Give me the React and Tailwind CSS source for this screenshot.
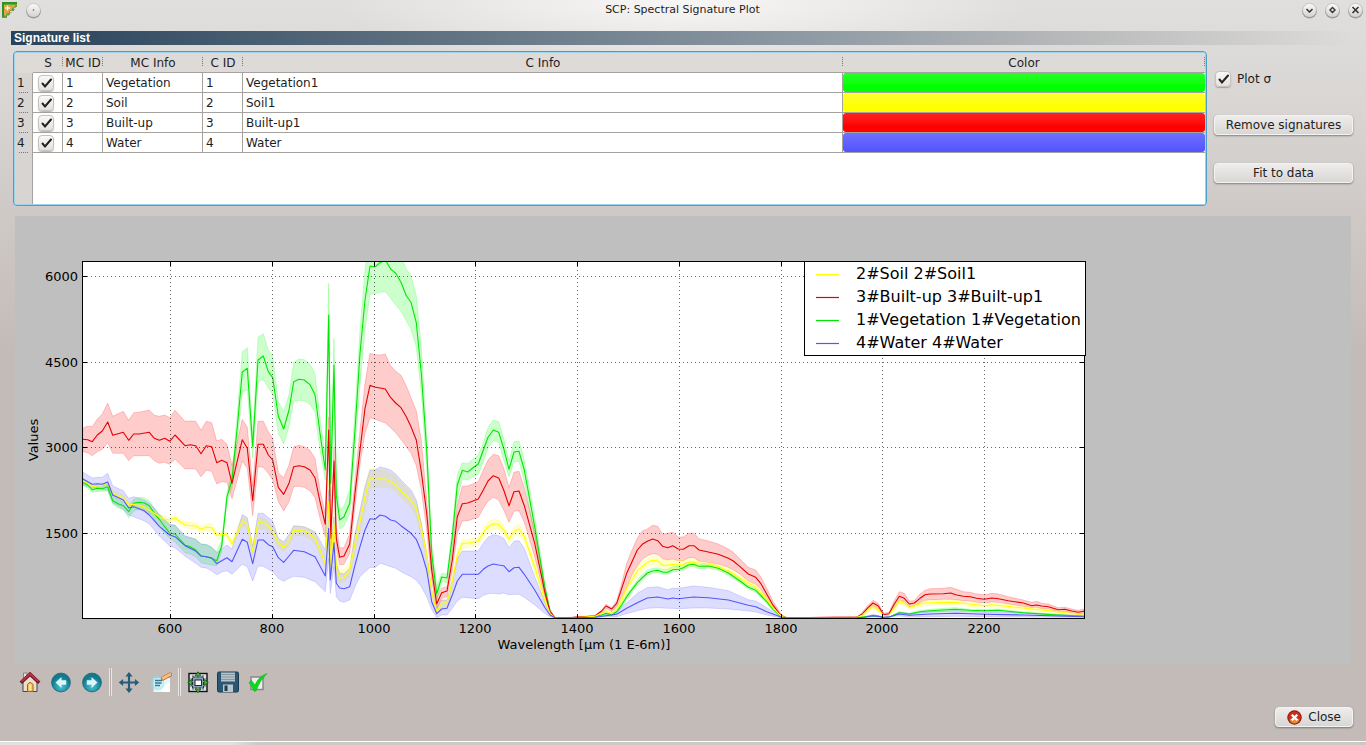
import React from "react";

// Each run: [origin x, origin y, samples]; samples are thirds of a unit from that origin,
// as [x, upper, mean, lower], or [x, value] where the deviation is nil.
const vegetation = [
  [70, 250, [[38,690,697,705],[53,695,705,715],[67,710,720,727],[82,705,715,725],[97,706,716,724],[113,702,710,722],[128,738,752,763],[144,748,761,773],[160,755,767,780],[176,770,785,803],[191,748,760,783],[207,742,757,778],[223,743,759,780],[238,752,767,790],[253,775,790,808],[268,795,808,830],[284,812,830,848],[299,825,849,865],[315,826,852,875],[345,860,885,908],[361,863,890,912],[377,868,900,920],[393,882,918,938],[409,883,920,942],[425,892,925,945],[440,905,932,948],[455,870,888,905],[471,725,740,755],[486,670,690,710],[502,490,530,570],[517,305,366,427],[532,293,355,419],[548,560,590,625],[564,262,330,397]]],
  [220, 250, [[130,251,318,388],[145,300,365,413],[158,318,383,433],[175,455,498,548],[191,485,537,582],[207,435,480,530],[221,337,395,455],[237,327,388,451],[253,329,390,452],[270,342,404,463],[285,372,434,486],[300,505,550,600],[316,620,660,690],[326,100,195,290],[332,660,700,740],[342,265,345,420],[349,690,735,770],[359,780,810,837],[372,768,800,828],[389,720,760,790]]],
  [330, 250, [[75,480,540,590],[90,240,310,400],[105,60,150,240],[120,-60,48,133],[135,-60,51,131],[150,-60,38,127],[166,-60,30,125],[182,-30,57,145],[197,0,70,165],[213,20,97,183],[229,57,137,213],[243,77,157,238],[259,138,218,290],[274,290,370,430],[290,560,600,660],[305,880,910,940],[320,1010,1032,1050],[335,970,981,995],[351,972,984,998]]],
  [430, 400, [[67,385,410,440],[82,225,255,295],[97,188,211,237],[113,191,216,240],[129,178,203,230],[145,165,192,223],[160,128,150,185],[174,83,112,143],[190,60,90,122],[206,65,97,127],[221,115,145,180],[237,185,208,230],[252,125,156,186],[267,124,154,184],[283,180,210,245],[314,350,380,410],[344,545,560,580],[360,628,635,642],[375,653]]],
  [560, 500, [[40,353],[105,350],[125,345],[138,337,340,344],[155,342,345,348],[170,330,335,340],[185,308,315,322],[200,283,290,298],[232,240,248,256],[262,210,219,226],[278,205,213,220],[293,203,211,218],[310,209,217,223],[323,208,217,222],[338,200,209,215],[358,199,208,214],[370,194,203,210],[385,187,195,202],[400,185,193,199],[415,193,199,206],[445,190,198,204],[475,198,205,211],[505,213,219,226],[540,237,243,249],[565,256,262,267],[587,265,271,277],[620,300,305,310],[640,325,329,333],[663,349],[680,353]]],
  [840, 560, [[52,173],[84,169],[99,167],[115,168],[131,173],[150,170],[178,155,158,160],[193,158,160,162],[208,160,162,164],[240,151,155,158],[270,148,152,155],[345,143,148,152],[390,148,151,153],[433,148,152,155],[475,147,151,154],[550,155,158,160],[640,162,164,166],[732,168,169,170]]],
];

const builtUp = [
  [70, 250, [[38,535,568,605],[53,528,569,608],[67,530,575,617],[82,507,555,605],[97,492,543,598],[113,459,516,578],[128,499,556,610],[160,484,547,610],[176,511,571,632],[191,488,552,617],[207,487,552,617],[238,480,547,617],[253,496,565,632],[268,499,571,640],[284,495,565,637],[299,503,574,643],[315,481,555,628],[345,514,587,657],[361,513,584,656],[377,514,587,657],[393,541,611,680],[409,514,587,661],[425,518,590,664],[440,573,638,702],[455,568,631,695],[471,583,638,697],[486,647,700,746],[517,508,569,633],[532,532,595,655],[548,710,752,797],[564,514,583,650]]],
  [220, 250, [[130,514,583,652],[145,545,615,670],[158,565,630,690],[175,668,712,755],[191,683,733,783],[207,645,700,755],[221,590,650,710],[237,586,647,709],[253,590,650,712],[270,601,660,722],[285,625,683,743],[300,720,755,805],[316,790,823,860],[326,500,540,580],[332,840,865,890],[342,590,633,680],[349,830,865,895],[359,893,922,945],[372,893,918,943],[389,850,882,910]]],
  [330, 250, [[75,690,730,770],[90,540,600,640],[105,400,475,550],[120,310,406,503],[133,314,411,507],[150,315,414,513],[166,312,417,519],[182,347,443,533],[197,364,459,548],[213,376,473,568],[229,408,500,590],[243,443,530,610],[259,483,570,647],[274,570,665,720],[290,750,790,840],[305,935,960,990],[320,1040,1062,1078],[335,1014,1028,1045],[351,1010,1023,1040]]],
  [430, 400, [[67,450,480,510],[82,315,350,400],[97,259,311,363],[113,258,309,362],[145,245,297,352],[160,210,270,325],[174,180,243,304],[190,163,227,292],[206,167,234,300],[221,205,270,330],[237,262,317,367],[252,217,275,334],[267,214,273,332],[283,265,317,367],[314,395,430,470],[344,560,575,590],[360,628,635,640],[375,653]]],
  [560, 500, [[40,352],[105,346,348,350],[125,330,333,340],[138,313,318,325],[155,323,327,335],[170,302,310,320],[185,250,265,290],[200,190,220,265],[216,150,185,225],[232,115,150,198],[247,93,133,178],[262,87,124,167],[278,76,117,161],[293,79,122,163],[308,103,139,177],[323,100,143,179],[338,97,137,177],[355,111,147,182],[370,111,148,182],[387,99,137,173],[402,100,137,173],[417,116,150,184],[445,123,156,187],[475,132,163,192],[505,147,175,202],[520,157,183,210],[540,177,200,222],[565,202,222,243],[587,210,232,253],[602,230,250,267],[620,265,282,295],[640,305,317,325],[663,342,347,350],[680,353]]],
  [840, 560, [[52,171],[68,155,161,166],[84,136,143,150],[99,121,129,138],[115,130,138,146],[131,160,164,168],[147,157,161,166],[163,122,132,140],[178,95,109,120],[193,100,115,125],[208,123,132,140],[223,122,129,138],[240,102,115,128],[255,91,104,121],[270,86,102,119],[310,85,101,118],[332,82,99,118],[350,88,105,119],[370,95,109,122],[390,97,110,123],[410,102,115,127],[433,104,118,129],[455,100,114,126],[475,102,116,127],[505,110,122,132],[550,120,129,139],[575,127,137,143],[590,124,135,142],[605,130,138,146],[625,132,140,147],[655,143,149,156],[675,142,148,155],[695,147,153,159],[715,151,157,163],[732,147,154,162]]],
];

const soil = [
  [70, 250, [[38,688,693,700],[53,695,700,706],[67,703,710,715],[97,700,706,712],[113,692,698,704],[128,722,733,738],[160,735,743,750],[176,755,765,770],[191,755,763,768],[220,763,770,778],[238,773,780,787],[268,792,800,810],[284,800,808,816],[299,802,810,818],[315,797,804,814],[345,815,825,833],[377,818,828,838],[393,830,838,848],[409,822,831,842],[425,820,833,843],[440,845,856,865],[462,843,852,862],[471,848,855,865],[486,872,882,890],[517,798,813,828],[532,808,821,838],[548,890,905,920],[564,803,817,836]]],
  [220, 250, [[130,803,817,836],[158,828,842,856],[175,868,880,894],[191,878,892,903],[207,860,873,888],[221,827,841,857],[253,831,843,858],[270,838,852,868],[285,848,865,880],[316,920,940,955],[326,690,755,810],[332,925,945,965],[342,780,820,860],[349,930,950,970],[359,958,985,1000],[372,958,982,995],[389,935,960,980]]],
  [330, 250, [[75,850,880,905],[90,785,815,850],[105,710,740,780],[120,656,686,715],[135,657,687,712],[166,662,687,712],[182,670,695,715],[197,680,704,724],[213,697,723,742],[243,730,750,772],[259,757,775,800],[274,820,835,855],[290,900,915,930],[305,1010,1025,1040],[320,1070,1084,1095],[335,1050,1060,1075],[351,1050,1058,1073]]],
  [430, 400, [[67,530,545,565],[82,452,467,485],[97,420,430,445],[113,420,430,443],[145,410,422,433],[160,385,398,413],[174,366,380,395],[190,358,371,386],[206,360,373,387],[221,378,390,402],[237,403,417,430],[252,383,394,408],[267,374,387,402],[283,395,410,425],[314,485,500,515],[344,590,600,610],[360,636,640,645],[375,653]]],
  [560, 500, [[40,353],[105,349],[138,330,333,338],[155,338,341,345],[170,322,328,334],[185,290,300,310],[200,255,265,280],[216,225,240,250],[232,198,212,227],[262,172,187,198],[278,170,181,194],[293,170,183,197],[310,182,197,208],[323,180,195,207],[338,178,193,206],[355,181,195,207],[370,181,193,205],[387,176,186,198],[402,177,187,198],[417,183,190,200],[445,185,191,202],[475,193,200,207],[505,205,212,220],[540,227,234,240],[565,243,250,257],[587,252,260,267],[620,292,298,303],[640,320,325,330],[663,348],[680,353]]],
  [840, 560, [[52,172],[68,161,165,168],[84,145,150,156],[99,133,140,146],[115,145,150,155],[131,167],[147,166],[163,138,144,152],[178,118,125,132],[193,123,130,136],[208,138,143,148],[240,125,132,140],[255,122,129,137],[340,120,127,135],[370,124,130,138],[433,132,137,142],[455,129,134,140],[550,139,144,149],[640,150,154,158],[715,160,163,166],[732,159,162,165]]],
];

const water = [
  [70, 250, [[38,666,686,705],[53,676,695,710],[67,684,703,715],[82,682,701,715],[97,682,703,718],[113,670,696,720],[128,708,735,758],[160,722,750,778],[176,745,774,795],[191,740,770,800],[222,750,782,812],[238,760,795,822],[253,775,812,840],[268,793,829,858],[299,822,855,888],[315,826,860,893],[345,857,887,918],[377,868,903,940],[393,882,918,952],[409,884,920,954],[425,892,924,963],[440,908,941,974],[455,897,932,966],[471,885,923,962],[486,897,935,973],[517,793,868,943],[532,803,877,950],[548,890,941,993],[564,790,870,948]]],
  [220, 250, [[130,790,870,949],[145,803,884,958],[158,812,890,965],[175,865,923,985],[191,875,937,994],[207,853,918,985],[221,827,901,979],[253,830,905,982],[285,845,920,995],[316,900,978,1025],[326,720,835,925],[331,900,990,1030],[342,800,878,950],[349,940,1000,1040],[359,970,1014,1053],[372,972,1016,1057],[389,955,1010,1050]]],
  [330, 250, [[75,850,945,1010],[90,780,890,980],[105,710,840,965],[120,660,806,952],[135,660,808,953],[150,651,795,940],[166,655,799,944],[182,660,810,950],[197,672,814,955],[213,690,827,965],[243,720,850,980],[259,750,868,990],[274,820,905,1010],[290,910,960,1040],[305,1020,1055,1078],[320,1072,1091,1103],[335,1050,1077,1095],[351,1050,1075,1095]]],
  [430, 400, [[67,540,585,625],[82,475,543,603],[97,453,523,592],[145,453,523,596],[160,430,508,586],[174,412,498,581],[190,404,492,580],[206,407,495,582],[221,415,497,579],[237,443,515,584],[252,424,503,583],[267,422,502,583],[283,445,523,592],[314,530,570,615],[344,605,622,640],[360,640,645,650],[375,653]]],
  [560, 500, [[40,353],[105,352],[138,343,347,350],[170,335,343,350],[200,308,325,341],[232,280,308,332],[262,263,294,325],[293,260,291,323],[323,269,297,325],[338,264,294,325],[355,265,296,326],[400,258,291,324],[445,262,293,324],[505,272,300,327],[565,299,316,333],[587,303,320,336],[620,323,335,345],[663,349,351,353],[680,353]]],
  [840, 560, [[52,173],[75,172],[99,163,167,171],[131,172],[150,170],[178,156,162,168],[208,160,166,171],[270,155,162,170],[350,152,160,169],[433,156,163,170],[550,158,165,171],[732,167,170,172]]],
];

function expand(runs) {
  return runs.flatMap(([ox, oy, pts]) =>
    pts.map((p) => {
      const [x, hi, mean = hi, lo = hi] = p;
      return [ox + x / 3, oy + hi / 3, oy + mean / 3, oy + lo / 3].map((n) => Math.round(n * 10) / 10);
    })
  );
}
const line = (pts) => pts.map((p) => `${p[0]},${p[2]}`).join(" ");
const band = (pts) => [...pts.map((p) => `${p[0]},${p[1]}`), ...[...pts].reverse().map((p) => `${p[0]},${p[3]}`)].join(" ");

const series = [
  { name: "vegetation", stroke: "#00e600", fill: "#00ff00", pts: expand(vegetation) },
  { name: "builtup", stroke: "#e60000", fill: "#ff0000", pts: expand(builtUp) },
  { name: "soil", stroke: "#ffff00", fill: "#ffff00", pts: expand(soil) },
  { name: "water", stroke: "#5555ff", fill: "#5555ff", pts: expand(water) },
];

const xTicks = [[170, "600"], [272, "800"], [374, "1000"], [475, "1200"], [577, "1400"], [679, "1600"], [781, "1800"], [882, "2000"], [984, "2200"]];
const yTicks = [[276, "6000"], [362, "4500"], [447, "3000"], [533, "1500"]];
const legend = [["#ffff00", "2#Soil 2#Soil1"], ["#e60000", "3#Built-up 3#Built-up1"], ["#00e600", "1#Vegetation 1#Vegetation"], ["#5555ff", "4#Water 4#Water"]];

function Chart() {
  return (
    <svg viewBox="15 216 1336 448" preserveAspectRatio="xMinYMin meet" className="block h-auto w-full" fontFamily="DejaVu Sans, sans-serif" fontSize="13" role="img" aria-label="Spectral signatures">
      <defs>
        <clipPath id="axes"><rect x="82" y="261" width="1003" height="357.500" /></clipPath>
      </defs>
      <rect x="82" y="261" width="1003" height="358" fill="#fff" />
      <g clipPath="url(#axes)">
        {series.map((s) => (
          <polygon key={s.name} points={band(s.pts)} fill={s.fill} fillOpacity="0.2" stroke={s.fill} strokeOpacity="0.2" />
        ))}
        {series.map((s) => (
          <polyline key={s.name} points={line(s.pts)} fill="none" stroke={s.stroke} strokeWidth="1.1" strokeLinejoin="round" />
        ))}
      </g>
      <g stroke="#000" strokeOpacity="0.6" strokeDasharray="1 3" shapeRendering="crispEdges">
        {xTicks.map(([x]) => <path key={x} d={`M${x + 0.5} 262V618`} />)}
        {yTicks.map(([y]) => <path key={y} d={`M83 ${y + 0.5}H1084`} />)}
      </g>
      <g stroke="#000" shapeRendering="crispEdges">
        {xTicks.map(([x]) => <path key={x} d={`M${x + 0.5} 262v4M${x + 0.5} 614v4`} />)}
        {yTicks.map(([y]) => <path key={y} d={`M83 ${y + 0.5}h4M1080 ${y + 0.5}h4`} />)}
        <rect x="82.5" y="261.5" width="1002" height="357" fill="none" />
      </g>
      {xTicks.map(([x, t]) => <text key={t} x={x} y="633" textAnchor="middle">{t}</text>)}
      {yTicks.map(([y, t]) => <text key={t} x="78" y={y + 5} textAnchor="end">{t}</text>)}
      <text x="584" y="649" textAnchor="middle">Wavelength [µm (1 E-6m)]</text>
      <text transform="translate(38 440) rotate(-90)" textAnchor="middle">Values</text>
      <rect x="804.5" y="261.5" width="281" height="94" fill="#fff" stroke="#000" shapeRendering="crispEdges" />
      {legend.map(([c, t], i) => (
        <g key={t}>
          <path d={`M816 ${274.5 + i * 23}h23`} stroke={c} strokeWidth="1.2" />
          <text x="856" y={279 + i * 23} fontSize="16">{t}</text>
        </g>
      ))}
    </svg>
  );
}

function Tick({ label, text }) {
  return (
    <label className="inline-flex items-center gap-1.5 align-top text-xs leading-4">
      <span className="grid size-4 shrink-0">
        <input type="checkbox" defaultChecked aria-label={label} className="peer col-start-1 row-start-1 m-0 size-4 appearance-none rounded border border-[#c4c1be] bg-linear-to-b from-[#f8f8f7] to-[#e4e2e0] shadow-[0_1px_1px_#77777788]" />
        <svg viewBox="0 0 16 16" className="pointer-events-none invisible col-start-1 row-start-1 size-4 peer-checked:visible">
          <path d="M4.500 8.500L7 11.500L13 4.500" fill="none" stroke="#222" strokeWidth="2" strokeLinecap="round" />
        </svg>
      </span>
      {text}
    </label>
  );
}

const rows = [
  ["1", "Vegetation", "1", "Vegetation1", "bg-linear-to-b from-[#26ff26] to-[#00ff00] to-70%"],
  ["2", "Soil", "2", "Soil1", "bg-linear-to-b from-[#ffff2b] to-[#ffff00] to-70%"],
  ["3", "Built-up", "3", "Built-up1", "bg-linear-to-b from-[#ff2020] to-[#ff0000] to-70%"],
  ["4", "Water", "4", "Water", "bg-linear-to-b from-[#7070ff] to-[#5555ff] to-90%"],
];

function SignatureTable() {
  return (
    <div className="min-w-0 flex-1 overflow-hidden rounded-[4px] border border-[#4a9fc6] bg-white shadow-[inset_0_0_0_1px_#9fd3ec]">
      <div className="m-px flex h-[151px]">
        <div className="flex min-w-0 flex-1 bg-[linear-gradient(to_right,#d7d4d2_17px,#a5a2a0_17px,#a5a2a0_18px,#ffffff_18px)]">
          <table className="h-[100px] w-full table-fixed border-separate border-spacing-0 text-xs leading-4">
            <colgroup>
              <col className="w-[18px]" /><col className="w-[30px]" /><col className="w-[40px]" /><col className="w-[100px]" /><col className="w-[40px]" /><col /><col className="w-[362px]" />
            </colgroup>
            <thead>
              <tr className="h-5 bg-[#dddad8]">
                <td className="p-0" />
                {["S", "MC ID", "MC Info", "C ID", "C Info", "Color"].map((h) => (
                  <th key={h} scope="col" className="relative border-b border-[#a5a2a0] p-0 text-center font-normal whitespace-nowrap">
                    {h}
                    <span className="absolute top-1 right-0 h-[9px] border-r border-dotted border-[#777]" />
                  </th>
                ))}
              </tr>
            </thead>
            <tbody>
              {rows.map((r, i) => (
                <tr key={r[0]} className="h-5">
                  <th scope="row" className="relative border-r border-[#a5a2a0] bg-[#d7d4d2] p-0 pl-0.5 text-left font-normal">
                    {i + 1}
                    <span className="absolute bottom-0 left-1 w-[9px] border-b border-dotted border-[#777]" />
                  </th>
                  <td className="border-r border-b border-[#a5a2a0] p-0 pr-1 text-center"><Tick label={`Plot ${r[1]}`} /></td>
                  {r.slice(0, 4).map((c, k) => (
                    <td key={k} className="truncate border-r border-b border-[#a5a2a0] p-0 pl-[3px]">{c}</td>
                  ))}
                  <td className="border-b border-[#a5a2a0] p-0">
                    <button type="button" aria-label={`Color of ${r[1]}`} className={"block h-[19px] w-full rounded-[3px] " + r[4]} />
                  </td>
                </tr>
              ))}
            </tbody>
          </table>
        </div>
      </div>
    </div>
  );
}

const buttonLook = "rounded-[4px] border border-[#f4f3f2] bg-linear-to-b from-[#eeedec] to-[#d9d7d5] text-xs leading-4 text-[#222] shadow-[0_1px_2px_#555555aa]";

function RoundButton({ label, children }) {
  return (
    <button type="button" aria-label={label} className="size-[15px]">
      <svg viewBox="0 0 15 15" className="size-full overflow-visible">
        <circle cx="7.5" cy="8.200" r="7.300" fill="#8d8a88" />
        <circle cx="7.5" cy="7.300" r="6.900" fill="url(#knob)" stroke="#b5b3b1" strokeWidth="0.6" />
        {children}
      </svg>
    </button>
  );
}

function Tool({ label, children }) {
  return (
    <button type="button" aria-label={label} title={label} className="size-[22px]">
      <svg viewBox="0 0 22 22" className="size-full">{children}</svg>
    </button>
  );
}

const Separator = () => <div className="h-7 w-[3px] border-x border-[#e9e6e4] bg-[#b3aca8]" />;

function Toolbar() {
  return (
    <div className="flex h-[22px] items-center gap-1.5 pl-2">
      <div className="flex gap-[9px]">
        <Tool label="Home">
          <path d="M4 10.500L11 4L18 10.500V20.500H4Z" fill="#e9dfcd" stroke="#4b4640" strokeWidth="1" />
          <path d="M4.500 2h3.500v5h-3.500z" fill="#ece2da" stroke="#826d62" strokeWidth="0.8" />
          <path d="M8.500 20.500v-7q2.500-4 5.500 0v7z" fill="#f9bd55" stroke="#9d6423" />
          <path d="M10 19.500v-5.500q1.200-2 2.400 0v5.500z" fill="#ffe29a" />
          <path d="M1.800 11.800L11 3.200L20.200 11.800" fill="none" stroke="#741425" strokeWidth="3.400" />
          <path d="M2.500 10.700L11 2.900L19.500 10.700" fill="none" stroke="#b8374a" strokeWidth="1.700" />
        </Tool>
        <Tool label="Back">
          <circle cx="11" cy="11.500" r="9.400" fill="url(#teal)" stroke="#0f6a7c" strokeWidth="0.800" />
          <path d="M5.500 11.500L11.500 6v3.300h4.700v4.400h-4.700v3.300z" fill="#d8f7fa" />
        </Tool>
        <Tool label="Forward">
          <circle cx="11" cy="11.500" r="9.400" fill="url(#teal)" stroke="#0f6a7c" strokeWidth="0.800" />
          <path d="M16.500 11.500L10.500 6v3.300H5.800v4.400h4.700v3.300z" fill="#d8f7fa" />
        </Tool>
      </div>
      <Separator />
      <div className="flex gap-2.5">
        <Tool label="Pan">
          <path d="M11 1l3.600 4.600h-2.500v4.800h4.800V7.900l4.300 3.600l-4.300 3.600v-2.500h-4.800v4.800h2.500L11 22l-3.600-4.600h2.500v-4.800H5.100v2.500L.8 11.500l4.300-3.600v2.500h4.800V5.600H7.400z" fill="#235d7a" />
        </Tool>
        <Tool label="Zoom to rectangle">
          <rect x="3.500" y="7" width="16.500" height="14" fill="#e7f8fb" />
          <path d="M14.500 14.500L20 11v10h-9z" fill="#fff" />
          <circle cx="7.500" cy="12" r="7" fill="#8ed8e5" fillOpacity="0.55" />
          <circle cx="8.500" cy="12.500" r="5.200" fill="#c8eff4" />
          <path d="M5 9.500h7M5 12h6.500M5 14.500h5" stroke="#35799b" strokeWidth="1.300" />
          <path d="M13 7.500L20 3.600" stroke="#a96f42" strokeWidth="4.200" strokeLinecap="round" />
          <path d="M13 7.200L20 3.400" stroke="#ffbd7a" strokeWidth="2.800" strokeLinecap="round" />
        </Tool>
      </div>
      <Separator />
      <div className="flex gap-2">
        <Tool label="Configure subplots">
          <rect x="2" y="2.500" width="18" height="18" fill="#d8e5eb" stroke="#111" strokeWidth="1.400" />
          <path d="M3 8h3v-4M16 4v4h3M3 15h3v4M16 19v-4h3" fill="none" stroke="#5a6870" />
          <rect x="5.500" y="6" width="11" height="11" fill="#87a5b3" stroke="#252d31" strokeDasharray="3 1" />
          <rect x="8" y="9" width="6.500" height="5.500" fill="#fff" stroke="#223" />
          <path d="M11 .8L14 5H8zM11 21.700L8 18h6zM.7 11.500L5 8.500v6zM21.300 11.500L17 8.500v6z" fill="#3fba2f" stroke="#163c14" strokeWidth="0.700" />
        </Tool>
        <Tool label="Save figure">
          <path d="M.5 2.500q0-1.500 1.500-1.500h18q1.500 0 1.500 1.500v17q0 1.500-1.500 1.500H2Q.5 21 .5 19.500z" fill="#285875" stroke="#173a50" />
          <rect x="4" y="1.500" width="14" height="9" fill="#b9c2c7" />
          <path d="M4 3.500h14M4 6h14M4 8.500h14" stroke="#7b8d97" strokeWidth="0.800" />
          <rect x="6" y="13.500" width="10" height="7.500" fill="#bdc7cd" />
          <rect x="7.500" y="14.500" width="3" height="5.500" fill="#1e3a4d" />
        </Tool>
        <Tool label="Edit parameters">
          <rect x="4" y="6" width="12" height="12.500" fill="#eee" stroke="#858585" strokeWidth="1.400" />
          <path d="M2 11.500L4.500 9.500L8 14Q12 5 20 2.500Q12.500 9.500 9 20Q7.500 20.500 7 20Q5 15 2 11.500z" fill="#08d91a" stroke="#09b718" strokeWidth="0.600" />
        </Tool>
      </div>
    </div>
  );
}

export default function App() {
  return (
    <div className="flex min-h-screen flex-col bg-[radial-gradient(ellipse_350px_70px_at_50%_0,#f8f7f6,#f8f7f600),linear-gradient(to_bottom,#e0dfdd_0,#dcdad8_60px,#c3bbb7_350px)] font-['DejaVu_Sans',sans-serif] text-[#1d1d1d]">
      <svg className="absolute size-0" aria-hidden="true">
        <defs>
          <linearGradient id="knob" x2="0" y2="1"><stop stopColor="#fafafa" /><stop offset="1" stopColor="#d4d2d0" /></linearGradient>
          <radialGradient id="teal" cx="0.5" cy="0.7"><stop stopColor="#4ac6d6" /><stop offset="1" stopColor="#15798e" /></radialGradient>
        </defs>
      </svg>
      <header className="grid h-5 grid-cols-[1fr_auto_1fr] items-center pr-[3px] pl-0.5">
        <div className="flex items-center gap-2">
          <svg viewBox="0 0 16 16" className="size-4">
            <path d="M0 0h15v5h-3v4h-4v4h-3v3h-5z" fill="#64aa35" />
            <path d="M0 0h15v2h-13v13h-2z" fill="#319522" />
            <path d="M2 3h11v3h-3v3h-3v3h-3v2h-2z" fill="#dfa24c" />
            <path d="M3 6h5M5.500 3.500v5" stroke="#fff1c5" strokeWidth="1.300" />
            <path d="M14 5h-2v3h-3v3h-3v3h-4" fill="none" stroke="#777f48" strokeDasharray="1 1" />
          </svg>
          <RoundButton label="Window menu"><circle cx="7.500" cy="7" r="0.800" fill="#555" /></RoundButton>
        </div>
        <h1 className="text-[11px] leading-4">SCP: Spectral Signature Plot</h1>
        <div className="flex justify-end gap-2">
          <RoundButton label="Minimize"><path d="M4.500 6l3 3l3-3" fill="none" stroke="#333" strokeWidth="1.500" /></RoundButton>
          <RoundButton label="Maximize"><path d="M7.500 4.500L10 7L7.500 9.500L5 7z" fill="none" stroke="#333" strokeWidth="1.400" /></RoundButton>
          <RoundButton label="Close window"><path d="M4.500 4l6 6M10.500 4l-6 6" stroke="#333" strokeWidth="1.600" /></RoundButton>
        </div>
      </header>

      <main className="flex flex-col pt-[11px]">
        <h2 className="mr-3 ml-[11px] h-3.5 bg-[linear-gradient(to_right,#29435a,#8c98a2_58%,#b8b9ba_79%,#d8d6d500)] pl-[3px] font-['Liberation_Sans',sans-serif] text-xs leading-[14px] font-bold text-white">Signature list</h2>
        <section className="flex gap-[7px] pt-1.5 pr-[13px] pl-[13px]">
          <SignatureTable />
          <div className="flex w-[139px] flex-col pt-5">
            <div className="flex pl-px"><Tick text="Plot σ" /></div>
            <button type="button" className={"mt-7 h-5 " + buttonLook}>Remove signatures</button>
            <button type="button" className={"mt-7 h-5 " + buttonLook}>Fit to data</button>
          </div>
        </section>
        <section className="mt-2.5 mr-[15px] ml-[15px] bg-[#bfbfbf]"><Chart /></section>
        <div className="pt-[7px] pl-[11px]"><Toolbar /></div>
        <div className="flex justify-end pt-3.5 pr-[13px]">
          <button type="button" className={"flex h-5 items-center gap-1.5 px-[11px] " + buttonLook}>
            <svg viewBox="0 0 15 15" className="size-[15px]">
              <circle cx="7.500" cy="7.500" r="7.200" fill="#8e120c" />
              <circle cx="7.500" cy="7.500" r="6.200" fill="#ce2f16" />
              <path d="M2.500 9.500q5-2.500 10 0q-1.500 4-5 4t-5-4" fill="#e88b25" />
              <path d="M4.700 4.700l5.600 5.600M10.300 4.700l-5.600 5.600" stroke="#fff" strokeWidth="2.300" />
            </svg>
            Close
          </button>
        </div>
      </main>
      <footer className="mt-auto h-1 border-t border-white bg-linear-to-r from-[#e2e1e0] from-17% to-[#cbc8c6] to-19%" />
    </div>
  );
}
